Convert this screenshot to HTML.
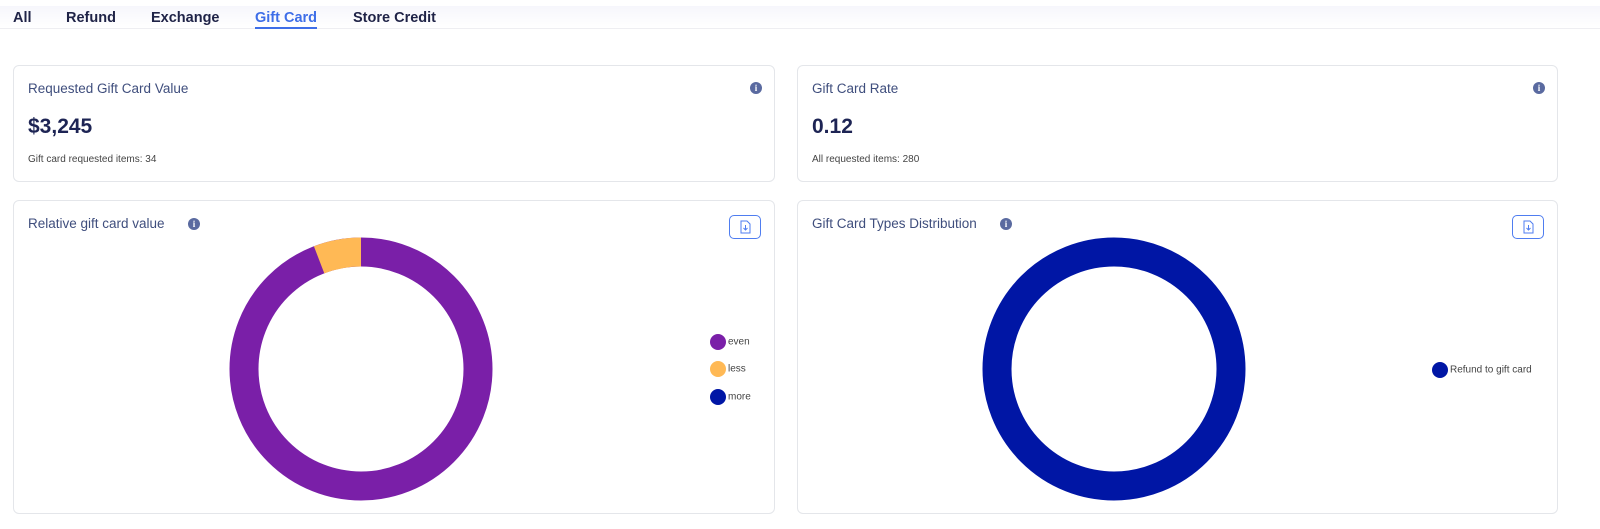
<!DOCTYPE html>
<html><head><style>
body{margin:0;width:1600px;height:529px;background:#fff;font-family:"Liberation Sans",sans-serif;position:relative;overflow:hidden}
.tabs{position:absolute;left:0;top:6px;width:1600px;height:22px;background:linear-gradient(#f6f6fc,#fff);border-bottom:1px solid #eeeef2}
.tab{position:absolute;top:4px;font-size:14.5px;font-weight:bold;color:#1f2347}
.card{position:absolute;border:1px solid #e4e6ea;border-radius:6px;background:#fff;box-sizing:border-box}
.t{position:absolute;left:14px;top:15px;font-size:13.5px;color:#3f4e7d}
.v{position:absolute;left:14px;top:49px;font-size:21px;font-weight:bold;color:#1d2454}
.s{position:absolute;left:14px;top:88px;font-size:10px;color:#444}
.i{position:absolute;width:12px;height:12px;border-radius:50%;background:#5a6aa0;color:#fff;font-size:9px;font-weight:bold;text-align:center;line-height:12px;font-family:"Liberation Serif",serif}
.btn{position:absolute;width:32px;height:24px;border:1px solid #4f7df0;border-radius:5px;box-sizing:border-box}
.lg{position:absolute;font-size:10px;color:#444}
.lg b{display:inline-block;width:16px;height:16px;border-radius:50%;vertical-align:middle;margin-right:2px}
</style></head><body>
<div class="tabs">
<span class="tab" style="left:13px">All</span>
<span class="tab" style="left:66px">Refund</span>
<span class="tab" style="left:151px">Exchange</span>
<span class="tab" style="left:255px;color:#3e6ee8;border-bottom:2px solid #3e6ee8;padding-bottom:1px">Gift Card</span>
<span class="tab" style="left:353px">Store Credit</span>
</div>
<div class="card" style="left:13px;top:65px;width:762px;height:117px">
<div class="t">Requested Gift Card Value</div><div class="i" style="left:736px;top:16px">i</div>
<div class="v">$3,245</div><div class="s">Gift card requested items: 34</div></div>
<div class="card" style="left:797px;top:65px;width:761px;height:117px">
<div class="t">Gift Card Rate</div><div class="i" style="left:735px;top:16px">i</div>
<div class="v">0.12</div><div class="s">All requested items: 280</div></div>
<div class="card" style="left:13px;top:200px;width:762px;height:314px">
<div class="t">Relative gift card value</div><div class="i" style="left:174px;top:17px">i</div>
<div class="btn" style="left:715px;top:14px"><svg width="30" height="22"><path d="M11 5h6l3 3v9h-9z" fill="none" stroke="#4f7df0"/><path d="M15.5 9v5M13.5 12l2 2 2-2" fill="none" stroke="#4f7df0"/></svg></div>
<div class="lg" style="left:696px;top:133px"><b style="background:#7a1fa8"></b>even</div>
<div class="lg" style="left:696px;top:160px"><b style="background:#ffb955"></b>less</div>
<div class="lg" style="left:696px;top:188px"><b style="background:#0016a5"></b>more</div>
</div>
<div class="card" style="left:797px;top:200px;width:761px;height:314px">
<div class="t">Gift Card Types Distribution</div><div class="i" style="left:202px;top:17px">i</div>
<div class="btn" style="left:714px;top:14px"><svg width="30" height="22"><path d="M11 5h6l3 3v9h-9z" fill="none" stroke="#4f7df0"/><path d="M15.5 9v5M13.5 12l2 2 2-2" fill="none" stroke="#4f7df0"/></svg></div>
<div class="lg" style="left:634px;top:161px"><b style="background:#0016a5"></b>Refund to gift card</div>
</div>
<svg style="position:absolute;left:0;top:0" width="1600" height="529">
<circle cx="361" cy="369" r="117" fill="none" stroke="#7a1fa8" stroke-width="29"/>
<path d="M361 252 A117 117 0 0 0 319.1 259.8" fill="none" stroke="#ffb955" stroke-width="29"/>
<circle cx="1114" cy="369" r="117" fill="none" stroke="#0016a5" stroke-width="29"/>
</svg>
</body></html>
